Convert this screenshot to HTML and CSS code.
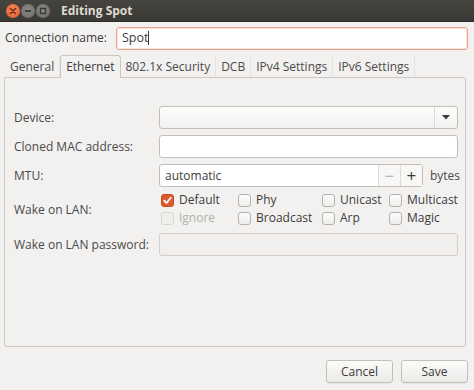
FILE: index.html
```html
<!DOCTYPE html>
<html>
<head>
<meta charset="utf-8">
<link rel="stylesheet" href="styles.css">
</head>
<body>
<div class="window">
  <div class="titlebar">
    <div class="wbtns">
      <span class="wbtn close"><svg width="14" height="14" viewBox="0 0 14 14"><path d="M4.5 4.5 L9.5 9.5 M9.5 4.5 L4.5 9.5" stroke="#7a2a12" stroke-width="1.6" stroke-linecap="round"/></svg></span>
      <span class="wbtn"><svg width="14" height="14" viewBox="0 0 14 14"><path d="M4 7 H10" stroke="#3a3935" stroke-width="1.8"/></svg></span>
      <span class="wbtn"><svg width="14" height="14" viewBox="0 0 14 14"><rect x="4.5" y="4.5" width="5" height="5" fill="none" stroke="#3a3935" stroke-width="1.4"/></svg></span>
    </div>
    <div class="title">Editing Spot</div>
  </div>
  <div class="content">
    <div class="conn-row">
      <label class="conn-label">Connection name:</label>
      <div class="entry focus">Spot<span class="caret"></span></div>
    </div>
    <div class="notebook">
      <div class="tabs">
        <div class="tab">General</div>
        <div class="tab active">Ethernet</div>
        <div class="tab">802.1x Security</div>
        <div class="tab">DCB</div>
        <div class="tab">IPv4 Settings</div>
        <div class="tab">IPv6 Settings</div>
      </div>
      <div class="panel">
        <div class="form">
          <div class="lbl">Device:</div>
          <div class="combo"><div class="combo-field"></div><div class="combo-btn"><svg width="8" height="5" viewBox="0 0 8 5"><path d="M0 0 H8 L4 4.5 Z" fill="#3c3c3c"/></svg></div></div>

          <div class="lbl">Cloned MAC address:</div>
          <div class="entry"></div>

          <div class="lbl">MTU:</div>
          <div class="mtu">
            <div class="spin"><div class="spin-field">automatic</div><div class="spin-btn dim">&minus;</div><div class="spin-btn">+</div></div>
            <span class="unit">bytes</span>
          </div>

          <div class="lbl">Wake on LAN:</div>
          <div class="checks">
            <label class="chk"><span class="box checked"><svg width="11" height="11" viewBox="0 0 11 11"><path d="M2.2 5.6 L4.5 8 L8.8 2.8" fill="none" stroke="#fff" stroke-width="1.8" stroke-linecap="round" stroke-linejoin="round"/></svg></span>Default</label>
            <label class="chk"><span class="box"></span>Phy</label>
            <label class="chk"><span class="box"></span>Unicast</label>
            <label class="chk"><span class="box"></span>Multicast</label>
            <label class="chk disabled"><span class="box"></span>Ignore</label>
            <label class="chk"><span class="box"></span>Broadcast</label>
            <label class="chk"><span class="box"></span>Arp</label>
            <label class="chk"><span class="box"></span>Magic</label>
          </div>

          <div class="lbl">Wake on LAN password:</div>
          <div class="entry disabled-entry"></div>
        </div>
      </div>
    </div>
    <div class="actions">
      <button class="btn">Cancel</button>
      <button class="btn">Save</button>
    </div>
  </div>
</div>
</body>
</html>
```
FILE: styles.css
```css
* { box-sizing: border-box; }
html, body { margin: 0; padding: 0; }
body {
  width: 474px;
  height: 390px;
  overflow: hidden;
  background: #f2f1f0;
  font-family: "Open Sans", "DejaVu Sans", sans-serif;
  font-size: 12px;
  line-height: 16px;
  color: #3c3c3c;
}
.window { width: 474px; height: 390px; display: flex; flex-direction: column; }
.titlebar {
  height: 22px;
  background: linear-gradient(#45443f, #3a3935);
  display: flex;
  align-items: center;
  padding-left: 6px;
  border-bottom: 1px solid #2e2d2a;
}
.wbtns { display: flex; gap: 1px; }
.wbtn {
  width: 14px; height: 14px; border-radius: 50%;
  background: radial-gradient(circle at 50% 40%, #8a8984, #6b6a66);
  display: flex; align-items: center; justify-content: center;
}
.wbtn.close { background: radial-gradient(circle at 50% 40%, #f58a5d, #e05a2b); }
.title {
  color: #dfdbd2;
  font-weight: bold;
  font-size: 12px;
  margin-left: 11px;
}
.content { flex: 1; display: flex; flex-direction: column; padding: 4px 6px 0 4px; }
.conn-row { display: flex; align-items: center; height: 24px; }
.conn-label { width: 112px; padding-left: 1px; }
.entry {
  height: 23px;
  border: 1px solid #c2bfba;
  border-radius: 3px;
  background: #fff;
  display: flex; align-items: center;
  padding-left: 5px;
  color: #3c3c3c;
}
.conn-row .entry { flex: 1; font-size: 12.5px; }
.entry.focus { border-color: #e9a388; box-shadow: inset 0 0 0 1px #fbe3da; }
.caret { display: inline-block; width: 1px; height: 14px; background: #3c3c3c; }
.notebook { margin-top: 5px; display: flex; flex-direction: column; }
.tabs { display: flex; height: 22px; align-items: flex-end; padding-left: 1px; position: relative; z-index: 1; }
.tab {
  height: 21px;
  padding: 0 5px 0 5px;
  display: flex; align-items: center;
  border-right: 1px solid #e4e2df;
  color: #4a4a4a;
}
.tab.active {
  height: 23px;
  background: #f2f1f0;
  border: 1px solid #cbc8c3;
  border-bottom: none;
  border-radius: 3px 3px 0 0;
  color: #3c3c3c;
  margin-bottom: -1px;
}
.panel {
  height: 270px;
  border: 1px solid #cbc8c3;
  border-radius: 0 3px 3px 3px;
  margin-right: 2px;
  padding: 28px 7px 0 9px;
}
.form {
  display: grid;
  grid-template-columns: 145px 1fr;
  row-gap: 6px;
  align-items: center;
}
.lbl { color: #4a4a4a; }
.form > .entry, .combo { height: 23px; }
.combo {
  display: flex;
  border: 1px solid #c2bfba;
  border-radius: 3px;
  background: linear-gradient(#fcfcfb, #f3f2f0);
}
.combo-field { flex: 1; }
.combo-btn {
  width: 23px;
  border-left: 1px solid #dddbd7;
  display: flex; align-items: center; justify-content: center;
}
.mtu { display: flex; align-items: center; height: 23px; }
.spin {
  flex: 1;
  display: flex;
  height: 23px;
  border: 1px solid #c2bfba;
  border-radius: 3px;
  background: #fff;
}
.spin-field { flex: 1; display: flex; align-items: center; padding-left: 5px; color: #3c3c3c; }
.spin-btn {
  width: 22px;
  border-left: 1px solid #dddbd7;
  display: flex; align-items: center; justify-content: center;
  font-size: 17px;
  line-height: 1;
  color: #3c3c3c;
  background: #f8f7f6;
}
.spin-btn.dim { color: #b0aeaa; }
.unit { margin-left: 7px; margin-right: -2px; color: #4a4a4a; }
.checks {
  display: grid;
  grid-template-columns: 77px 84px 67px 1fr;
  grid-auto-rows: 16px;
  row-gap: 2px;
  padding: 0 0 1px 2px;
  margin-top: -1px;
}
.chk { display: flex; align-items: center; height: 16px; color: #3c3c3c; white-space: nowrap; }
.box {
  width: 13px; height: 13px;
  border: 1px solid #b5b2ad;
  border-radius: 3px;
  background: linear-gradient(#fdfdfd, #eeedeb);
  margin-right: 5px;
  display: flex; align-items: center; justify-content: center;
}
.box.checked { background: #dd5c2e; border-color: #c4501f; }
.chk.disabled { color: #b4b1ac; }
.chk.disabled .box { border-color: #d8d6d2; background: #efeeec; }
.disabled-entry { background: #f0efed; border-color: #d3d0cb; }
.actions {
  display: flex;
  justify-content: flex-end;
  gap: 8px;
  margin-top: 13px;
}
.btn {
  width: 67px; height: 23px;
  font-family: inherit;
  font-size: 12px;
  color: #3c3c3c;
  border: 1px solid #c2bfba;
  border-radius: 3px;
  background: linear-gradient(#fbfbfa, #ebeae8);
  box-shadow: 0 1px 0 rgba(0,0,0,0.04);
  padding: 0;
}
```
